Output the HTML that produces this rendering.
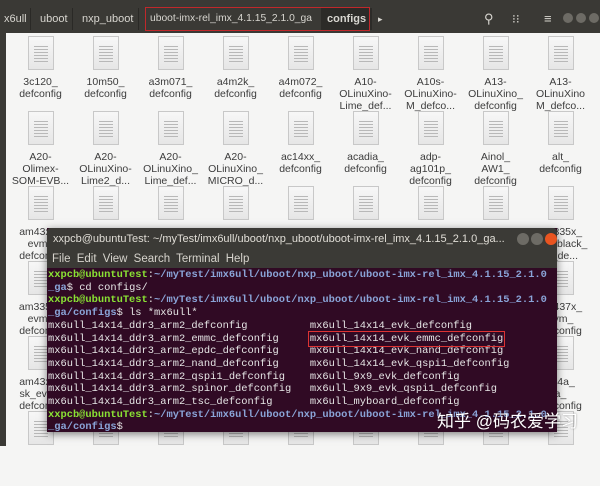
<!DOCTYPE html>
<html><head><meta charset="utf-8"><style>
*{margin:0;padding:0;box-sizing:border-box}
body{width:600px;height:446px;overflow:hidden;background:#f5f5f4;font-family:"Liberation Sans",sans-serif;position:relative}
#top{position:absolute;left:0;top:0;width:600px;height:33px;background:#3a3935;}
.bc{position:absolute;top:8px;height:22px;line-height:22px;color:#d8d6d0;font-size:11px;padding:0 6px;white-space:nowrap}
.sep{position:absolute;top:8px;width:1px;height:22px;background:#2a2926}
#left{position:absolute;left:0;top:33px;width:6px;height:413px;background:#3a3935}
#grid{position:absolute;left:8px;top:36px;display:grid;grid-template-columns:repeat(9,65px);grid-auto-rows:75px}
.c{text-align:center;font-size:10.5px;line-height:12px;color:#3c3c3c}
.i{width:26px;height:34px;margin:0 auto 6px;background:linear-gradient(#f7f7f7,#e6e6e6);border:1px solid #c8c8c8;position:relative}
.i:before{content:"";position:absolute;left:5px;right:5px;top:9px;height:16px;background:repeating-linear-gradient(#b8b8b8 0 1px,transparent 1px 3px)}
#term{position:absolute;left:47px;top:228px;width:510px;height:204px;background:#300a24;box-shadow:0 2px 8px rgba(0,0,0,.5)}
#tt{height:22px;background:#3b3a36;color:#e0ddd6;font-size:11px;line-height:22px;padding-left:6px;white-space:nowrap;border-radius:4px 4px 0 0;overflow:hidden;width:465px}
#mn{height:18px;background:#3b3a36;color:#d6d3cc;font-size:11.5px;line-height:18px;padding-left:5px;word-spacing:3px}
pre{font-family:"Liberation Mono",monospace;font-size:10.4px;line-height:12.7px;color:#e6e6e6;padding:1px 0 0 1px}
.g{color:#8ae234;font-weight:bold}.b{color:#8aa4d8;font-weight:bold}
.wb{position:absolute;top:5px;width:12px;height:12px;border-radius:6px;background:#6d6b65}
</style></head><body>
<div id="top">
<div class="bc" style="left:-2px">x6ull</div><div class="sep" style="left:30px"></div>
<div class="bc" style="left:34px">uboot</div><div class="sep" style="left:72px"></div>
<div class="bc" style="left:76px">nxp_uboot</div><div class="sep" style="left:138px"></div>
<div class="bc" style="left:144px;font-size:10.3px">uboot-imx-rel_imx_4.1.15_2.1.0_ga</div>
<div class="bc" style="left:321px;background:#2c2b28;font-weight:bold;padding:0 6px">configs</div>
<div style="position:absolute;left:145px;top:7px;width:225px;height:24px;border:1.5px solid #c0282b"></div>
<div class="bc" style="left:372px;font-size:9px">▸</div>
<div class="bc" style="left:478px;font-size:13px">⚲</div>
<div class="bc" style="left:506px;font-size:12px">⁝⁝</div>
<div class="bc" style="left:538px;font-size:13px">≡</div>
<div style="position:absolute;left:563px;top:13px;width:10px;height:10px;border-radius:5px;background:#6d6b65"></div>
<div style="position:absolute;left:576px;top:13px;width:10px;height:10px;border-radius:5px;background:#6d6b65"></div>
<div style="position:absolute;left:589px;top:13px;width:10px;height:10px;border-radius:5px;background:#6d6b65"></div>
</div>
<div id="left"></div>
<div id="grid">
<div class="c"><div class="i"></div>3c120_<br>defconfig</div>
<div class="c"><div class="i"></div>10m50_<br>defconfig</div>
<div class="c"><div class="i"></div>a3m071_<br>defconfig</div>
<div class="c"><div class="i"></div>a4m2k_<br>defconfig</div>
<div class="c"><div class="i"></div>a4m072_<br>defconfig</div>
<div class="c"><div class="i"></div>A10-<br>OLinuXino-<br>Lime_def...</div>
<div class="c"><div class="i"></div>A10s-<br>OLinuXino-<br>M_defco...</div>
<div class="c"><div class="i"></div>A13-<br>OLinuXino_<br>defconfig</div>
<div class="c"><div class="i"></div>A13-<br>OLinuXino<br>M_defco...</div>
<div class="c"><div class="i"></div>A20-<br>Olimex-<br>SOM-EVB...</div>
<div class="c"><div class="i"></div>A20-<br>OLinuXino-<br>Lime2_d...</div>
<div class="c"><div class="i"></div>A20-<br>OLinuXino_<br>Lime_def...</div>
<div class="c"><div class="i"></div>A20-<br>OLinuXino_<br>MICRO_d...</div>
<div class="c"><div class="i"></div>ac14xx_<br>defconfig</div>
<div class="c"><div class="i"></div>acadia_<br>defconfig</div>
<div class="c"><div class="i"></div>adp-<br>ag101p_<br>defconfig</div>
<div class="c"><div class="i"></div>Ainol_<br>AW1_<br>defconfig</div>
<div class="c"><div class="i"></div>alt_<br>defconfig</div>
<div class="c"><div class="i"></div>am43xx_<br>evm_<br>defconfig</div>
<div class="c"><div class="i"></div>am43xx</div><div class="c"><div class="i"></div>am43xx</div><div class="c"><div class="i"></div>am43xx</div>
<div class="c"><div class="i"></div>am57xx</div><div class="c"><div class="i"></div>am57xx</div><div class="c"><div class="i"></div>am335x</div><div class="c"><div class="i"></div>am335x</div>
<div class="c"><div class="i"></div>am335x_<br>boneblack_<br>..._de...</div>
<div class="c"><div class="i"></div>am335x_<br>evm_<br>defconfig</div>
<div class="c"><div class="i"></div></div><div class="c"><div class="i"></div></div><div class="c"><div class="i"></div></div><div class="c"><div class="i"></div></div><div class="c"><div class="i"></div></div><div class="c"><div class="i"></div></div><div class="c"><div class="i"></div></div>
<div class="c"><div class="i"></div>am437x_<br>evm_<br>defconfig</div>
<div class="c"><div class="i"></div>am43xx_<br>sk_evm_<br>defconfig</div>
<div class="c"><div class="i"></div></div><div class="c"><div class="i"></div></div><div class="c"><div class="i"></div></div><div class="c"><div class="i"></div></div><div class="c"><div class="i"></div></div><div class="c"><div class="i"></div></div><div class="c"><div class="i"></div></div>
<div class="c"><div class="i"></div>sh4a_<br>a_<br>defconfig</div>
<div class="c"><div class="i"></div></div><div class="c"><div class="i"></div></div><div class="c"><div class="i"></div></div><div class="c"><div class="i"></div></div><div class="c"><div class="i"></div></div><div class="c"><div class="i"></div></div><div class="c"><div class="i"></div></div><div class="c"><div class="i"></div></div><div class="c"><div class="i"></div></div>
</div>
<div id="term">
<div style="height:22px;background:#3b3a36;border-radius:4px 4px 0 0;position:absolute;left:0;top:0;width:510px"></div>
<div id="tt" style="position:relative">xxpcb@ubuntuTest: ~/myTest/imx6ull/uboot/nxp_uboot/uboot-imx-rel_imx_4.1.15_2.1.0_ga...</div>
<div class="wb" style="left:470px"></div><div class="wb" style="left:484px"></div><div class="wb" style="left:498px;background:#e95420"></div>
<div id="mn">File Edit View Search Terminal Help</div>
<pre><span class="g">xxpcb@ubuntuTest</span>:<span class="b">~/myTest/imx6ull/uboot/nxp_uboot/uboot-imx-rel_imx_4.1.15_2.1.0</span>
<span class="b">_ga</span>$ cd configs/
<span class="g">xxpcb@ubuntuTest</span>:<span class="b">~/myTest/imx6ull/uboot/nxp_uboot/uboot-imx-rel_imx_4.1.15_2.1.0</span>
<span class="b">_ga/configs</span>$ ls *mx6ull*
mx6ull_14x14_ddr3_arm2_defconfig          mx6ull_14x14_evk_defconfig
mx6ull_14x14_ddr3_arm2_emmc_defconfig     <span style="outline:1px solid #d33;outline-offset:1px">mx6ull_14x14_evk_emmc_defconfig</span>
mx6ull_14x14_ddr3_arm2_epdc_defconfig     mx6ull_14x14_evk_nand_defconfig
mx6ull_14x14_ddr3_arm2_nand_defconfig     mx6ull_14x14_evk_qspi1_defconfig
mx6ull_14x14_ddr3_arm2_qspi1_defconfig    mx6ull_9x9_evk_defconfig
mx6ull_14x14_ddr3_arm2_spinor_defconfig   mx6ull_9x9_evk_qspi1_defconfig
mx6ull_14x14_ddr3_arm2_tsc_defconfig      mx6ull_myboard_defconfig
<span class="g">xxpcb@ubuntuTest</span>:<span class="b">~/myTest/imx6ull/uboot/nxp_uboot/uboot-imx-rel_imx_4.1.15_2.1.0</span>
<span class="b">_ga/configs</span>$</pre>
</div>
<div style="position:absolute;left:437px;top:407px;color:#fff;font-size:17px;font-family:'Liberation Sans','Noto Sans CJK SC',sans-serif;text-shadow:0 0 2px rgba(0,0,0,.4);white-space:nowrap">知乎 @码农爱学习</div>
</body></html>
